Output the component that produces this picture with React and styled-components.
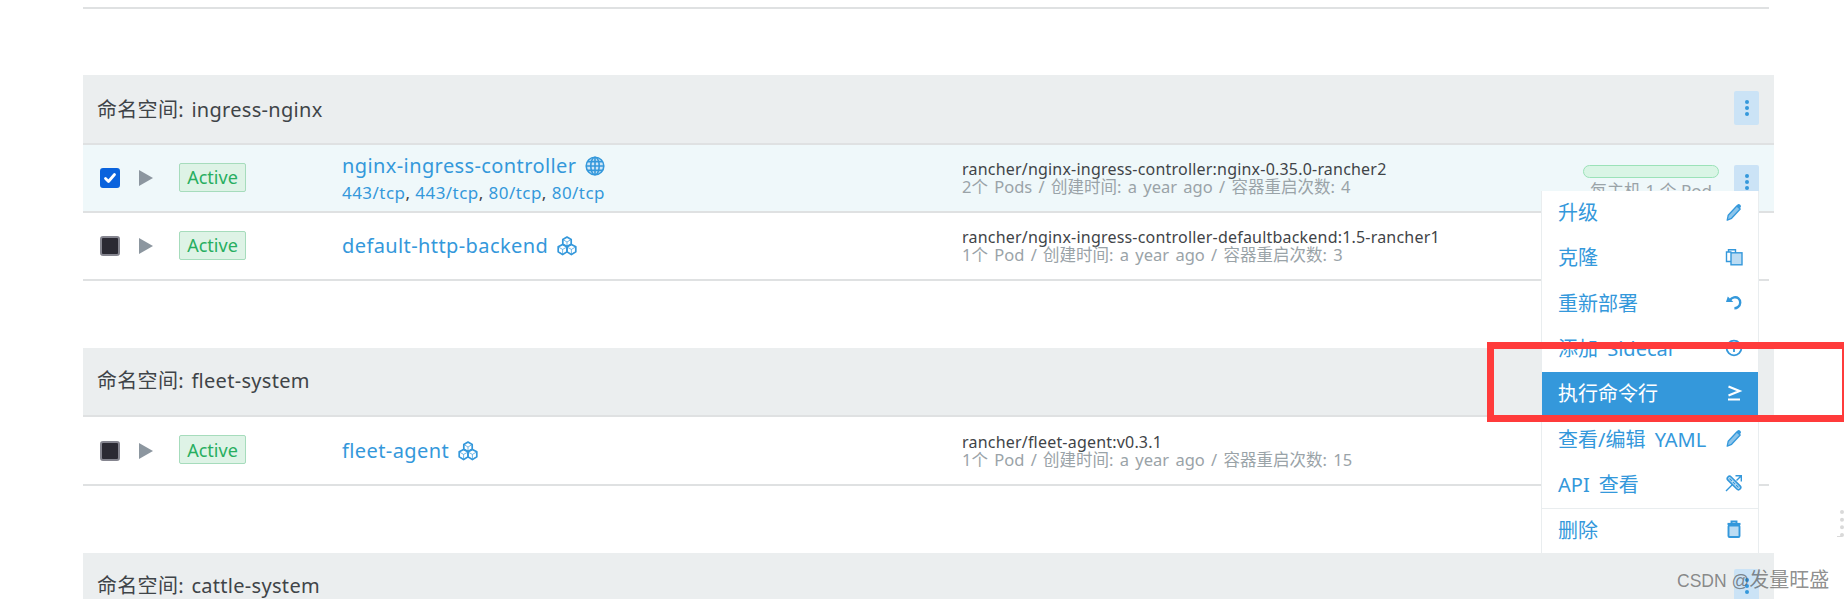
import styled, { createGlobalStyle } from 'styled-components'

const GlobalStyle = createGlobalStyle`
  html, body {
    margin: 0;
    padding: 0;
    background: #fff;
  }
  * {
    box-sizing: border-box;
  }
`

const blue = '#3498db'
const fontStack = `"Noto Sans", "Noto Sans CJK SC", sans-serif`

const Page = styled.div`
  position: relative;
  height: 599px;
  overflow: hidden;
  padding: 7px 0 0 83px;
  font-family: ${fontStack};
  color: #3f4448;
`

const TopRule = styled.div`
  width: 1686px;
  height: 2px;
  background: #dfe1e2;
  margin-bottom: 66px;
`

const Group = styled.section`
  width: 1691px;
  margin-bottom: ${(p) => p.$gap || 67}px;
`

const GroupHeader = styled.header`
  height: ${(p) => p.$h || 70}px;
  display: flex;
  align-items: center;
  justify-content: space-between;
  padding: 0 15px 2px 14px;
  background: #ebeeef;
  border-bottom: 2px solid #dfe1e2;
  font-size: 20px;
  letter-spacing: 0.3px;
  word-spacing: 2px;
  span {
    padding-bottom: ${(p) => p.$lift || 0}px;
  }
`

const MenuButton = styled.button`
  width: 25px;
  height: 34px;
  flex: none;
  display: flex;
  flex-direction: column;
  align-items: center;
  justify-content: center;
  gap: 2px;
  padding: 0;
  border: 0;
  border-radius: 2px;
  background: #cbe3f6;
  i {
    width: 4px;
    height: 4px;
    border-radius: 50%;
    background: ${blue};
  }
`

const RowMenuButton = styled(MenuButton)`
  align-self: flex-start;
  margin-top: 20px;
`

const Row = styled.div`
  width: ${(p) => (p.$active ? 1691 : 1686)}px;
  height: ${(p) => p.$h}px;
  display: flex;
  align-items: center;
  padding-left: 17px;
  background: ${(p) => (p.$active ? '#eff8fa' : '#fff')};
  border-bottom: 2px solid #dfe1e2;
`

const CheckCell = styled.div`
  width: 39px;
  flex: none;
`

const Check = styled.span`
  display: flex;
  align-items: center;
  justify-content: center;
  width: 20px;
  height: 20px;
  border-radius: 3px;
  background: ${(p) => (p.$checked ? '#0a63dd' : '#2b2a33')};
  border: 2px solid ${(p) => (p.$checked ? '#0a63dd' : '#85858f')};
`

const ArrowCell = styled.div`
  width: 40px;
  flex: none;
  display: flex;
`

const Arrow = styled.span`
  width: 0;
  height: 0;
  border-style: solid;
  border-width: 8px 0 8px 14px;
  border-color: transparent transparent transparent #8c969f;
`

const StateCell = styled.div`
  width: 163px;
  flex: none;
  display: flex;
  padding-bottom: 2px;
`

const Badge = styled.span`
  display: inline-flex;
  align-items: center;
  justify-content: center;
  width: 67px;
  height: 29px;
  border: 1px solid #a6dcbc;
  border-radius: 2px;
  background: #def3e6;
  color: #27ae60;
  font-size: 18px;
`

const NameCell = styled.div`
  width: 620px;
  flex: none;
  color: ${blue};
`

const Name = styled.div`
  display: flex;
  align-items: center;
  gap: 9px;
  font-size: 20px;
  letter-spacing: 0.4px;
  line-height: 26px;
`

const Ports = styled.div`
  font-size: 17px;
  letter-spacing: 0.45px;
  line-height: 20px;
  margin-top: 4px;
  span {
    color: #3f4448;
  }
  a {
    color: ${blue};
  }
`

const ImageCell = styled.div`
  width: 621px;
  flex: none;
`

const ImageName = styled.div`
  font-size: 16px;
  letter-spacing: 0.2px;
  line-height: 17px;
`

const ImageMeta = styled.div`
  font-size: 16.5px;
  line-height: 17px;
  color: #9aa3a8;
  word-spacing: 2px;
`

const ScaleCell = styled.div`
  width: 151px;
  flex: none;
  align-self: flex-start;
  padding-top: 20px;
`

const ScaleBar = styled.div`
  width: 136px;
  height: 13px;
  border: 1px solid #9be2b8;
  border-radius: 7px;
  background: #d9f5e5;
`

const ScaleText = styled.div`
  width: 136px;
  margin-top: 3px;
  text-align: center;
  font-size: 17px;
  line-height: 20px;
  color: #9aa3a8;
`

const ActionMenu = styled.ul`
  position: absolute;
  left: 1541px;
  top: 191px;
  width: 218px;
  height: 362px;
  margin: 0;
  padding: 0;
  list-style: none;
  background: #fff;
  border: solid #e9edef;
  border-width: 0 1px;
`

const MenuItem = styled.li`
  height: ${(p) => (p.$last ? 45 : 45.3)}px;
  display: flex;
  align-items: center;
  justify-content: space-between;
  padding: 0 15px 4px 16px;
  font-size: 20px;
  word-spacing: 4px;
  color: ${(p) => (p.$selected ? '#fff' : blue)};
  background: ${(p) => (p.$selected ? blue : 'transparent')};
  border-top: ${(p) => (p.$last ? '1px solid #e9edef' : '0')};
  svg {
    width: 18px;
    height: 18px;
    flex: none;
  }
`

const Callout = styled.div`
  position: absolute;
  left: 1487px;
  top: 342px;
  width: 362px;
  height: 80px;
  border: 7px solid #ff3b3b;
`

const Watermark = styled.div`
  position: absolute;
  left: 1677px;
  top: 566px;
  font-family: "Liberation Sans", "Noto Sans CJK SC", sans-serif;
  font-size: 17.5px;
  line-height: 28px;
  white-space: nowrap;
  color: rgba(70, 70, 70, 0.62);
  b {
    font-size: 20px;
    font-weight: 400;
  }
`

const EdgeMark = styled.div`
  position: absolute;
  left: 1837px;
  top: 510px;
  width: 7px;
  height: 27px;
  border-right: 4px dotted #d9d9d9;
  border-bottom: 1px solid #d9d9d9;
`

const Globe = () => (
  <svg width="20" height="20" viewBox="0 0 20 20" fill="#cfe6f6" stroke={blue} strokeWidth="1.6">
    <circle cx="10" cy="10" r="8.8" />
    <ellipse cx="10" cy="10" rx="4.2" ry="8.8" />
    <path d="M10 1.2v17.6M1.2 10h17.6M2.5 5.6h15M2.5 14.4h15" />
  </svg>
)

const Cubes = () => (
  <svg width="20" height="20" viewBox="0 0 20 20" fill="none" stroke={blue} strokeWidth="1.7" strokeLinejoin="round">
    <path d="M10 1l4.200 2.400v4.800L10 10.600 5.800 8.200V3.400z" />
    <path d="M5.600 8.400l4.400 2.400v5L5.600 18.600 1.200 15.800v-5z" />
    <path d="M14.400 8.400l4.400 2.400v5l-4.400 2.800L10 15.800v-5z" />
    <path d="M5.800 3.500L10 6l4.200-2.500M10 6v4.500M1.400 11l4.200 2.400L10 11M5.600 13.400v5M10 11l4.400 2.400 4.200-2.400M14.400 13.400v5" strokeWidth="0.7" />
  </svg>
)

const CheckMark = () => (
  <svg width="14" height="14" viewBox="0 0 14 14" fill="none" stroke="#fff" strokeWidth="2.800" strokeLinecap="round" strokeLinejoin="round">
    <path d="M2.500 7.500l3 3 6-7" />
  </svg>
)

const Pencil = () => (
  <svg viewBox="0 0 18 18" fill="none">
    <path d="M11.800 3l3.400 3-8.600 9.300-4.400 1.900 1-4.900z" fill="#8cc4ea" stroke={blue} strokeWidth="1.300" strokeLinejoin="round" />
    <path d="M12.500 1.600c.8-.8 1.800-.7 2.700.1.900.9 1 1.900.3 2.700l-.8.9-3-2.800z" fill={blue} />
  </svg>
)

const Clone = () => (
  <svg viewBox="0 0 18 18" fill="none" stroke={blue} strokeWidth="1.400">
    <path d="M6.500 4H1.500v9.500h5" fill="#fff" />
    <path d="M3.500 4V1.800h7V5" />
    <rect x="6" y="4.800" width="11" height="12" fill="#bcdcf3" />
  </svg>
)

const Undo = () => (
  <svg viewBox="0 0 18 18" fill="none" stroke={blue} strokeWidth="2.400">
    <path d="M5 7.200c1.800-3 6-3.800 8.400-1.800 2.600 2.200 2.400 6.400-.4 8.600-1.200 1-2.400 1.300-3.600 1.300" />
    <path d="M1 9h7.300L2.800 3.400z" fill={blue} stroke="none" />
  </svg>
)

const PlusCircle = () => (
  <svg viewBox="0 0 18 18" fill="none" stroke={blue} strokeWidth="1.800">
    <circle cx="9" cy="9" r="7.400" />
    <path d="M9 5v8M5.500 9h7" />
  </svg>
)

const Prompt = () => (
  <svg viewBox="0 0 18 18" fill="none" stroke="#fff" strokeWidth="2.200">
    <path d="M3.500 2.500l11 4.500-11 4.500M3 15.500h12" />
  </svg>
)

const Tools = () => (
  <svg viewBox="0 0 18 18" fill="none" stroke={blue} strokeWidth="1.400">
    <path d="M1 17l8-8M10.500 1.800h5.800v5.800M16.300 1.800L11.500 6.600" />
    <rect x="-2.200" y="-8.500" width="4.400" height="17" rx="2.200" transform="translate(9 9) rotate(-45)" fill="#cfe6f6" strokeWidth="1.700" />
    <path d="M4.500 4.500l2.500 2.500M7.800 7.800l2.500 2.500M11 11l2.500 2.500" strokeWidth="1.200" />
  </svg>
)

const Trash = () => (
  <svg viewBox="0 0 18 18" fill="none" stroke={blue} strokeWidth="1.900">
    <path d="M2.500 4h13" strokeWidth="2.200" />
    <path d="M6.500 3.500V1.500h5v2" />
    <rect x="3.500" y="5.500" width="11" height="11.500" rx="1" fill="#bcdcf3" />
  </svg>
)

const groups = [
  {
    name: 'ingress-nginx',
    gap: 67,
    rows: [
      {
        name: 'nginx-ingress-controller',
        icon: <Globe />,
        ports: ['443/tcp', '443/tcp', '80/tcp', '80/tcp'],
        image: 'rancher/nginx-ingress-controller:nginx-0.35.0-rancher2',
        meta: '2个 Pods / 创建时间: a year ago / 容器重启次数: 4',
        checked: true,
        h: 68,
      },
      {
        name: 'default-http-backend',
        icon: <Cubes />,
        image: 'rancher/nginx-ingress-controller-defaultbackend:1.5-rancher1',
        meta: '1个 Pod / 创建时间: a year ago / 容器重启次数: 3',
        h: 68,
      },
    ],
  },
  {
    name: 'fleet-system',
    gap: 67,
    h: 69,
    lift: 3,
    rows: [
      {
        name: 'fleet-agent',
        icon: <Cubes />,
        image: 'rancher/fleet-agent:v0.3.1',
        meta: '1个 Pod / 创建时间: a year ago / 容器重启次数: 15',
        h: 69,
      },
    ],
  },
  { name: 'cattle-system', lift: 3, rows: [] },
]

const actions = [
  { label: '升级', icon: <Pencil /> },
  { label: '克隆', icon: <Clone /> },
  { label: '重新部署', icon: <Undo /> },
  { label: '添加 Sidecar', icon: <PlusCircle /> },
  { label: '执行命令行', icon: <Prompt />, selected: true },
  { label: '查看/编辑 YAML', icon: <Pencil /> },
  { label: 'API 查看', icon: <Tools /> },
  { label: '删除', icon: <Trash />, last: true },
]

const Dots = () => (
  <>
    <i />
    <i />
    <i />
  </>
)

export default function App() {
  return (
    <Page>
      <GlobalStyle />
      <TopRule />
      {groups.map((group) => (
        <Group key={group.name} $gap={group.gap}>
          <GroupHeader $h={group.h} $lift={group.lift}>
            <span>命名空间: {group.name}</span>
            <MenuButton>
              <Dots />
            </MenuButton>
          </GroupHeader>
          {group.rows.map((row) => (
            <Row key={row.name} $active={row.checked} $h={row.h}>
              <CheckCell>
                <Check $checked={row.checked}>{row.checked && <CheckMark />}</Check>
              </CheckCell>
              <ArrowCell>
                <Arrow />
              </ArrowCell>
              <StateCell>
                <Badge>Active</Badge>
              </StateCell>
              <NameCell>
                <Name>
                  {row.name} {row.icon}
                </Name>
                {row.ports && (
                  <Ports>
                    {row.ports.map((port, i) => (
                      <span key={i}>
                        <a>{port}</a>
                        {i < row.ports.length - 1 && ', '}
                      </span>
                    ))}
                  </Ports>
                )}
              </NameCell>
              <ImageCell>
                <ImageName>{row.image}</ImageName>
                <ImageMeta>{row.meta}</ImageMeta>
              </ImageCell>
              {row.checked && (
                <ScaleCell>
                  <ScaleBar />
                  <ScaleText>每主机 1 个 Pod</ScaleText>
                </ScaleCell>
              )}
              {row.checked && (
                <RowMenuButton>
                  <Dots />
                </RowMenuButton>
              )}
            </Row>
          ))}
        </Group>
      ))}
      <ActionMenu>
        {actions.map((action) => (
          <MenuItem key={action.label} $selected={action.selected} $last={action.last}>
            {action.label}
            {action.icon}
          </MenuItem>
        ))}
      </ActionMenu>
      <Callout />
      <EdgeMark />
      <Watermark>
        CSDN @<b>发量旺盛</b>
      </Watermark>
    </Page>
  )
}
